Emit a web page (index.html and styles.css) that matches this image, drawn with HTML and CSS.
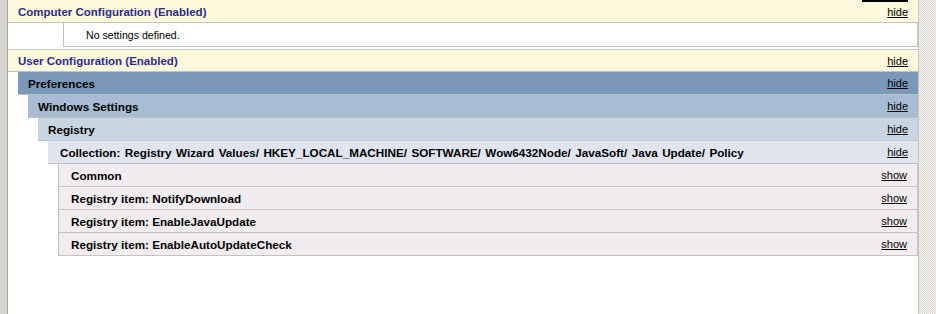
FILE: index.html
```html
<!DOCTYPE html>
<html>
<head>
<meta charset="utf-8">
<link rel="stylesheet" href="styles.css">
</head>
<body>
<div class="frame">
  <div class="leftbar"></div>
  <div class="main">
    <div class="section first">
      <div class="row hdr"><span class="ttl">Computer Configuration (Enabled)</span><a class="lnk">hide</a><span class="focus"></span></div>
      <div class="row empty"><span>No settings defined.</span></div>
    </div>
    <div class="section second">
      <div class="row hdr"><span class="ttl">User Configuration (Enabled)</span><a class="lnk">hide</a></div>
      <div class="row l1"><span class="b">Preferences</span><a class="lnk">hide</a></div>
      <div class="row l2"><span class="b">Windows Settings</span><a class="lnk">hide</a></div>
      <div class="row l3"><span class="b">Registry</span><a class="lnk">hide</a></div>
      <div class="row l4"><span class="b wide">Collection: Registry Wizard Values/ HKEY_LOCAL_MACHINE/ SOFTWARE/ Wow6432Node/ JavaSoft/ Java Update/ Policy</span><a class="lnk">hide</a></div>
      <div class="row item"><span class="b">Common</span><a class="lnk">show</a></div>
      <div class="row item"><span class="b">Registry item: NotifyDownload</span><a class="lnk">show</a></div>
      <div class="row item"><span class="b">Registry item: EnableJavaUpdate</span><a class="lnk">show</a></div>
      <div class="row item"><span class="b">Registry item: EnableAutoUpdateCheck</span><a class="lnk">show</a></div>
    </div>
  </div>
  <div class="scroll"></div>
</div>
</body>
</html>
```
FILE: styles.css
```css
html, body {
  margin: 0;
  padding: 0;
  background: #ffffff;
}
.frame {
  display: flex;
  width: 936px;
  height: 314px;
  overflow: hidden;
  font-family: "Liberation Sans", Arial, sans-serif;
  color: #000;
}
.leftbar {
  width: 7px;
  flex: none;
  background: #d6d3ce;
  border-right: 1px solid #a8a6a0;
}
.main {
  width: 910px;
  flex: none;
  display: flex;
  flex-direction: column;
}
.scroll {
  width: 17px;
  flex: none;
  border-left: 1px solid #c8c6c0;
  background-color: #ffffff;
  background-image: repeating-conic-gradient(#d4d0c8 0 25%, #ffffff 0 50%);
  background-size: 2px 2px;
}
.section {
  display: flex;
  flex-direction: column;
}
.second {
  margin-top: 2px;
}
.first {
  margin-top: -1px;
}
.row {
  height: 22px;
  display: flex;
  align-items: center;
  justify-content: space-between;
  padding: 0 10px;
  border-bottom: 1px solid #c2c2c2;
  box-sizing: content-box;
}
.hdr {
  position: relative;
  background: #fef8dd;
  border-top: 1px solid #c8c8c8;
  padding-top: 1px;
  height: 21px;
}
.second .hdr {
  height: 20px;
}
.ttl {
  font-weight: bold;
  font-size: 11.5px;
  color: #2c2c90;
}
.b {
  font-weight: bold;
  font-size: 11.7px;
}
.wide {
  word-spacing: 1.2px;
}
.lnk {
  font-size: 11px;
  color: #000;
  text-decoration: underline;
}
.focus {
  position: absolute;
  left: 854px;
  top: 0;
  width: 46px;
  height: 2px;
  background: #000;
}
.empty {
  margin-left: 55px;
  padding-left: 22px;
  height: 23px;
  background: #ffffff;
  border-left: 1px solid #c2c2c2;
  border-right: 1px solid #c2c2c2;
  font-size: 10.6px;
}
.l1 {
  margin-left: 10px;
  background: #7a99b9;
}
.l2 {
  margin-left: 20px;
  background: #a7bcd2;
}
.l3 {
  margin-left: 30px;
  background: #c7d4e1;
}
.l4 {
  margin-left: 40px;
  padding-left: 12px;
  background: #dfe4ef;
}
.item {
  margin-left: 50px;
  padding-left: 12px;
  background: #f0ecf0;
  border-left: 1px solid #c2c2c2;
  border-right: 1px solid #c2c2c2;
}
```
